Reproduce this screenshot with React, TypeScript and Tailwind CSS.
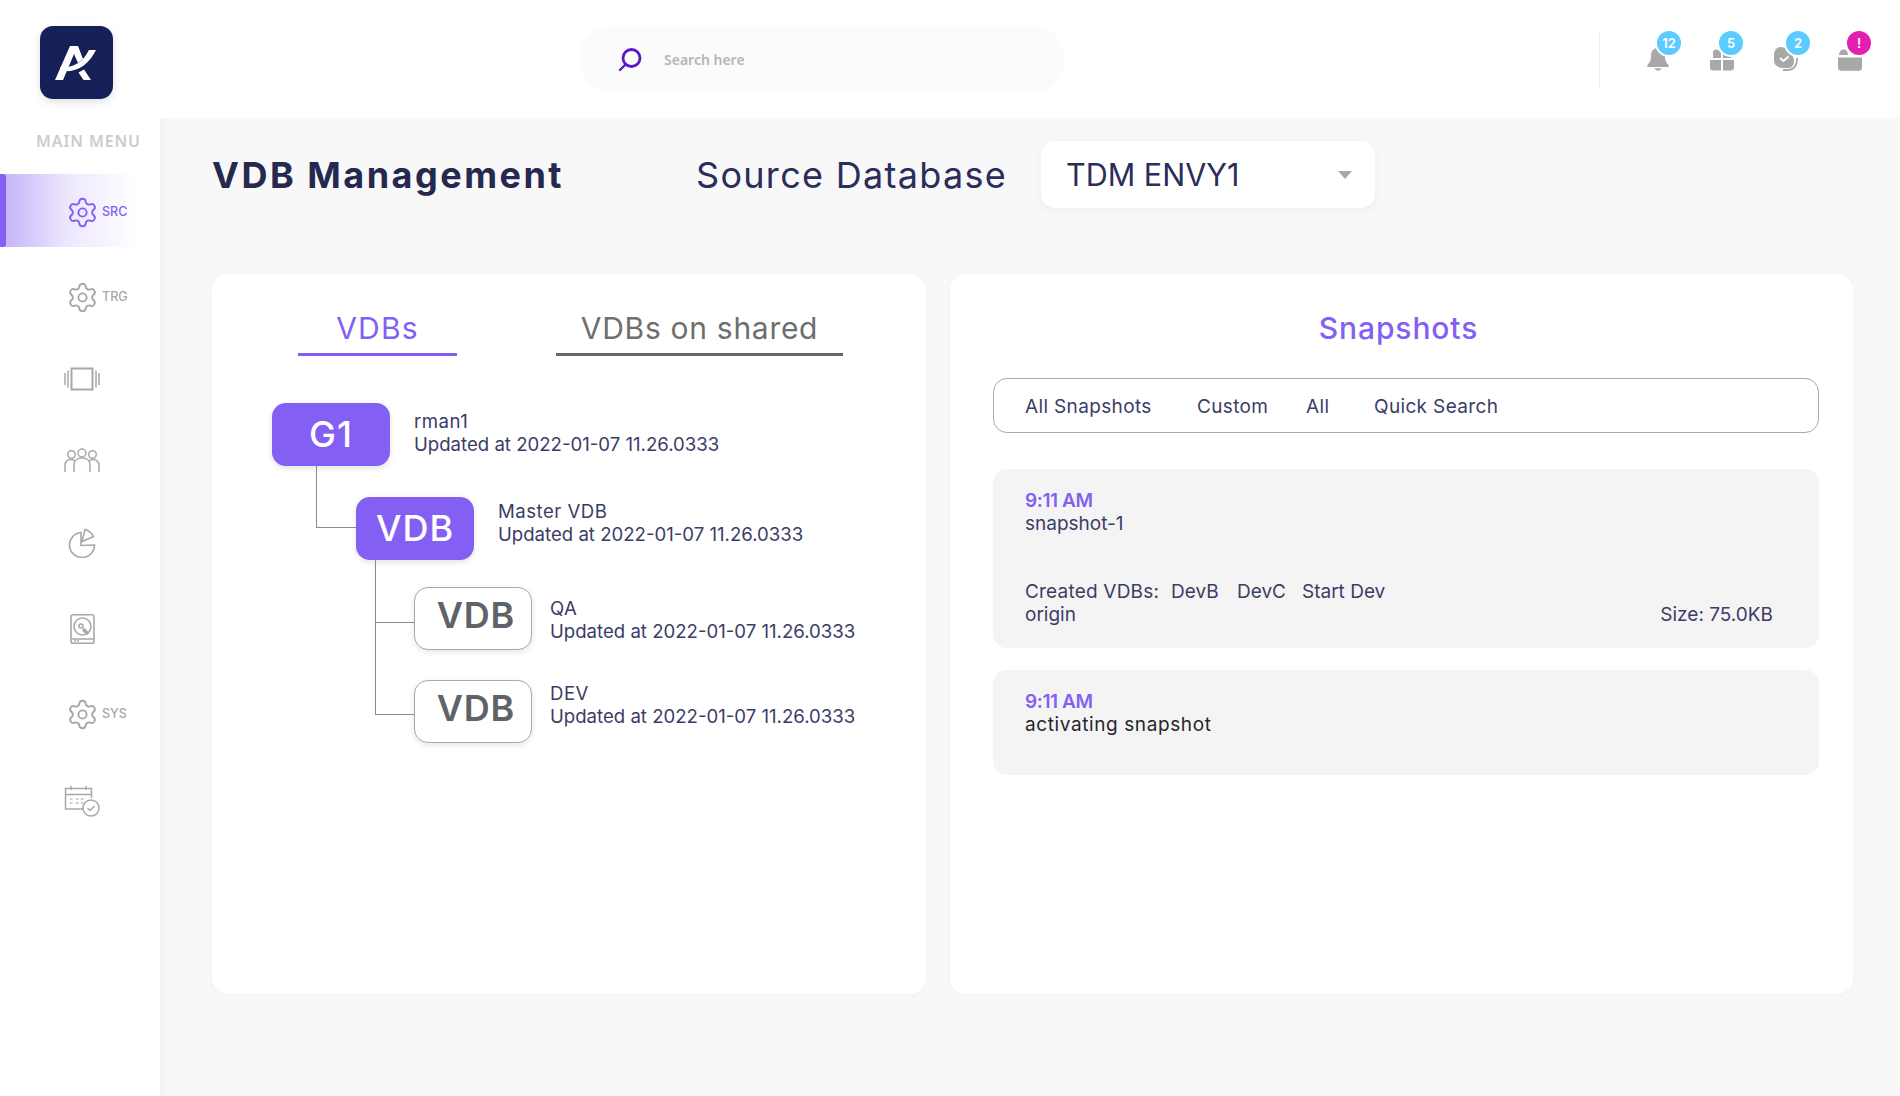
import * as React from "react";
import { Settings } from "lucide-react";

const font = "font-['Inter','Liberation_Sans',sans-serif]";

function LogoMark() {
  return (
    <svg viewBox="0 0 73 73" className="h-[73px] w-[73px]">
      <rect width="73" height="73" rx="13" fill="#152058" />
      <polygon points="15,54 30,20 38,20 43,33 38,37 34,28 23,54" fill="#fff" />
      <polygon points="38.500,46.500 44,43.500 51,54 43.500,54" fill="#fff" />
      <path d="M20 41C32 42 42 38 49 24L56 24C49 38 38 47 20 45Z" fill="#fff" />
    </svg>
  );
}

function StripIcon() {
  return (
    <svg viewBox="0 0 36 24" className="h-6 w-9" fill="none" stroke="#a8a8a8" strokeWidth="1.5">
      <rect x="7.500" y="1.500" width="21" height="21" strokeWidth="2" />
      <path d="M1 6v12M4 3.500v17M32 3.500v17M35 6v12" />
    </svg>
  );
}

function PeopleIcon() {
  return (
    <svg viewBox="0 0 36 26" className="h-[26px] w-9" fill="none" stroke="#a8a8a8" strokeWidth="1.5">
      <circle cx="7.500" cy="7.500" r="3.800" />
      <circle cx="18" cy="6" r="4" />
      <circle cx="28.500" cy="7.500" r="3.800" />
      <path d="M1 25v-7c0-3 2.500-5.500 6-5.500 1.500 0 3 .5 4 1.500" />
      <path d="M10 25v-7c0-4 3-7 8-7s8 3 8 7v7" />
      <path d="M35 25v-7c0-3-2.500-5.500-6-5.500-1.500 0-3 .5-4 1.500" />
    </svg>
  );
}

function PieIcon() {
  return (
    <svg viewBox="0 0 36 30" className="h-[30px] w-9" fill="none" stroke="#a8a8a8" strokeWidth="1.600">
      <path d="M17 4.500a12.500 12.500 0 1 0 13.500 12.500L17 17.500z" />
      <path d="M21 1.500l-3 12 11.500-5C28 5.500 24.500 2.500 21 1.500z" />
    </svg>
  );
}

function DiskIcon() {
  return (
    <svg viewBox="0 0 36 30" className="h-[30px] w-9" fill="none" stroke="#a8a8a8" strokeWidth="1.600">
      <rect x="7" y="0.800" width="23" height="28.400" rx="2" />
      <path d="M7 25h23M10 27h2M13 27h2" />
      <circle cx="18.500" cy="12.500" r="8.500" />
      <circle cx="17" cy="12" r="2" />
      <path d="M19 15l5 5" strokeWidth="3.500" />
    </svg>
  );
}

function CalendarIcon() {
  return (
    <svg viewBox="0 0 36 32" className="h-8 w-9" fill="none" stroke="#a8a8a8" strokeWidth="1.500">
      <path d="M22 24H1.500V3.500h26V13" />
      <path d="M1.500 9.500h26M7 1v4M22 1v4" />
      <path d="M6 14h3M12 14h3M17 14h3M6 18h3M12 18h3M17 18h3" strokeDasharray="1.500 1" />
      <circle cx="27" cy="23" r="8" fill="#fff" />
      <path d="M23.500 23l2.500 2.500 4.500-4.500" />
    </svg>
  );
}

function BellIcon() {
  return (
    <svg viewBox="0 0 24 24" className="h-6 w-6" fill="#a8a8a8">
      <path d="M12 1c-4.600 0-7 3.500-7 7.500 0 5-1.200 7-3.500 9.500-.7.800-.5 2 1 2h19c1.500 0 1.700-1.200 1-2-2.300-2.500-3.500-4.500-3.500-9.500C19 4.500 16.600 1 12 1z" />
      <path d="M8.500 21.300h7c-.5 1.500-1.900 2.500-3.500 2.500s-3-1-3.500-2.500z" />
    </svg>
  );
}

function GiftIcon() {
  return (
    <svg viewBox="0 0 24 22" className="h-[22px] w-6" fill="#a8a8a8">
      <path d="M3 3.500C3 1.500 4.500.5 6 .5s5 1.500 5 4.500v4H3z" />
      <path d="M13 9V5c0-3 3.500-4.500 5-4.500s3 1 3 3V9z" />
      <path d="M0 11h11v10.500H3c-1.700 0-3-1.300-3-3zM13 11h11v7.500c0 1.700-1.300 3-3 3h-8z" />
    </svg>
  );
}

function CheckBlobIcon() {
  return (
    <svg viewBox="0 0 24 24" className="h-6 w-6">
      <path d="M7 0C3 0 0 3 0 8v5c0 5 4 8 9 8h5c4 0 6-3 6-7 0-3-1-5-3-7-2.500-3-5.500-7-10-7z" fill="#a8a8a8" />
      <path d="M6 11l3.500 3 5-4.500" fill="none" stroke="#fff" strokeWidth="2" />
      <path d="M23 11c.5 7-3 12-10 12H9" fill="none" stroke="#a8a8a8" strokeWidth="1.800" />
    </svg>
  );
}

function FolderIcon() {
  return (
    <svg viewBox="0 0 24 22" className="h-[22px] w-6" fill="#a8a8a8">
      <path d="M1 6c0-3 2-5.500 4.500-5.500S10 2.500 10 6z" />
      <path d="M0 8.500h24v10c0 1.900-1.300 3.200-3 3.200H3c-1.700 0-3-1.300-3-3.200z" />
    </svg>
  );
}

function HeaderAlert({ icon, badge, alert, badgeClass }: { icon: React.ReactNode; badge: string; alert?: boolean; badgeClass: string }) {
  return (
    <div className="relative flex h-6 w-6 items-end">
      {icon}
      <span
        className={`absolute -top-[18px] flex h-[28px] w-[28px] items-center justify-center rounded-full border-2 border-white text-[13px] leading-none font-semibold text-white ${badgeClass} ${alert ? "bg-[#e21fb0]" : "bg-[#5ccbff]"}`}
      >
        {badge}
      </span>
    </div>
  );
}

function VdbNode({
  label,
  filled,
  title,
  rowClass,
  textClass,
  connector,
}: {
  label: string;
  filled: boolean;
  title: string;
  rowClass: string;
  textClass: string;
  connector?: React.ReactNode;
}) {
  return (
    <div className={`flex items-start ${rowClass}`}>
      <div
        className={`relative flex h-[63px] w-[118px] shrink-0 items-center justify-center rounded-[14px] text-[36px] ${
          filled
            ? "bg-[#8360f3] pb-0.5 font-medium tracking-[1px] text-white shadow-[0_2px_6px_rgba(0,0,0,0.12)]"
            : "border border-[#a9a9a9] bg-white pb-[7px] pl-1.5 font-semibold tracking-[0.8px] text-[#5f6368] shadow-[0_2px_6px_rgba(0,0,0,0.1)]"
        }`}
      >
        {label}
        {connector}
      </div>
      <div className={`text-[18.6px] leading-[22.5px] whitespace-nowrap text-[#3b3d66] ${textClass}`}>
        <div className="tracking-[0.5px]">{title}</div>
        <div>Updated at 2022-01-07 11.26.0333</div>
      </div>
    </div>
  );
}

export default function App() {
  return (
    <div className={`flex min-h-[1096px] w-[1900px] flex-col bg-white ${font}`}>
      <header className="flex h-[118px] shrink-0 items-start bg-white">
        <div className="mt-[26px] ml-10 rounded-[13px] shadow-[0_3px_8px_rgba(0,0,0,0.12)]">
          <LogoMark />
        </div>
        <div className="mt-[26px] ml-[466px] flex h-[67px] w-[486px] items-center rounded-full bg-[#fbfbfb] pl-[39px]">
          <svg viewBox="0 0 24 24" className="h-6 w-6" fill="none" stroke="#5a18c9" strokeWidth="2.800" strokeLinecap="round">
            <circle cx="13.500" cy="10" r="8.500" />
            <path d="M7 17l-5 5" strokeWidth="2.400" />
          </svg>
          <span className="ml-[22px] font-['Noto_Sans',sans-serif] text-[14px] font-semibold text-[#b5b5b5]">Search here</span>
        </div>
        <div className="mt-8 ml-[534px] h-[55px] w-px bg-[#f0f0f0]" />
        <div className="mt-[47px] ml-[46px] flex gap-[40px]">
          <HeaderAlert icon={<BellIcon />} badge="12" badgeClass="left-[9px]" />
          <HeaderAlert icon={<GiftIcon />} badge="5" badgeClass="left-[7px]" />
          <HeaderAlert icon={<CheckBlobIcon />} badge="2" badgeClass="left-[10px]" />
          <HeaderAlert icon={<FolderIcon />} badge="!" alert badgeClass="left-[7px]" />
        </div>
      </header>

      <div className="flex flex-1">
        <aside className="w-[160px] shrink-0 bg-white">
          <div className="pt-[14px] pl-9 font-['Noto_Sans',sans-serif] text-[16px] leading-[18px] font-semibold tracking-[0.9px] whitespace-nowrap text-[#cccccc]">
            MAIN MENU
          </div>
          <div className="relative mt-6 flex h-[73px] w-[145px] items-center bg-gradient-to-r from-[#c2b0f8] via-[#ece6fd] via-45% to-white to-95% pt-[3px] pl-[64px]">
            <span className="absolute top-0 left-0 h-full w-[6px] rounded-r-[3px] bg-[#8360f3]" />
            <span className="flex w-9 justify-center">
              <Settings size={33} strokeWidth={1.4} color="#8360f3" />
            </span>
            <span className="ml-0.5 text-[12.5px] font-medium text-[#8360f3]">SRC</span>
          </div>
          <div className="mt-[30px] flex h-10 items-center pl-[64px]">
            <span className="flex w-9 justify-center">
              <Settings size={33} strokeWidth={1.4} color="#a8a8a8" />
            </span>
            <span className="ml-0.5 text-[12.5px] font-medium text-[#a8a8a8]">TRG</span>
          </div>
          <div className="mt-[42px] flex h-10 items-center pl-[64px]">
            <StripIcon />
          </div>
          <div className="mt-[41px] flex h-10 items-center pl-[64px]">
            <PeopleIcon />
          </div>
          <div className="mt-[43px] flex h-10 items-center pl-[64px]">
            <PieIcon />
          </div>
          <div className="mt-[46px] flex h-10 items-center pl-[64px]">
            <DiskIcon />
          </div>
          <div className="mt-[45px] flex h-10 items-center pl-[64px]">
            <span className="flex w-9 justify-center">
              <Settings size={33} strokeWidth={1.4} color="#a8a8a8" />
            </span>
            <span className="ml-0.5 text-[12.5px] font-medium text-[#a8a8a8]">SYS</span>
          </div>
          <div className="mt-[47px] flex h-10 items-center pl-[64px]">
            <CalendarIcon />
          </div>
        </aside>

        <main className="flex-1 bg-[#f8f8f8] pt-[23px] pl-[52px] shadow-[inset_8px_0_8px_-6px_rgba(0,0,0,0.03)]">
          <div className="flex h-[67px] items-center">
            <h1 className="w-[484px] text-[36px] font-bold tracking-[2.5px] text-[#25284f]">VDB Management</h1>
            <span className="w-[345px] text-[36px] tracking-[1.3px] text-[#2b2d5b]">Source Database</span>
            <div className="flex h-[67px] w-[334px] items-center justify-between rounded-[14px] bg-white pr-[23px] pl-[25px] shadow-[0_2px_8px_rgba(0,0,0,0.05)]">
              <span className="text-[30.5px] text-[#2b2d5b]">TDM ENVY1</span>
              <span className="h-0 w-0 border-x-[7px] border-t-[8px] border-x-transparent border-t-[#a8a8a8]" />
            </div>
          </div>

          <div className="mt-[66px] flex gap-6">
            <section className="h-[720px] w-[714px] rounded-[16px] bg-white pt-[36px] shadow-[0_1px_6px_rgba(0,0,0,0.03)]">
              <div className="flex pl-[86px]">
                <div className="w-[159px] border-b-[3px] border-[#8360f3] pb-[7px] text-center text-[30px] leading-[36px] tracking-[1.2px] text-[#8360f3]">VDBs</div>
                <div className="ml-[99px] w-[287px] border-b-[3px] border-[#666666] pb-[7px] text-center text-[30px] leading-[36px] tracking-[0.7px] text-[#6e6e6e]">
                  VDBs on shared
                </div>
              </div>
              <div className="mt-[47px] pl-[60px]">
                <VdbNode label="G1" filled title="rman1" rowClass="" textClass="ml-[24px] pt-[7px]" />
                <VdbNode
                  label="VDB"
                  filled
                  title="Master VDB"
                  rowClass="mt-[31px] ml-[84px]"
                  textClass="ml-[24px] pt-[3px]"
                  connector={<span className="absolute -top-[31px] -left-[40px] h-[62px] w-[40px] border-b border-l border-[#8a8a8a]" />}
                />
                <VdbNode
                  label="VDB"
                  filled={false}
                  title="QA"
                  rowClass="mt-[27px] ml-[142px]"
                  textClass="ml-[18px] pt-[10px]"
                  connector={<span className="absolute -top-[28px] -left-[40px] h-[63px] w-[39px] border-b border-l border-[#8a8a8a]" />}
                />
                <VdbNode
                  label="VDB"
                  filled={false}
                  title="DEV"
                  rowClass="mt-[30px] ml-[142px]"
                  textClass="ml-[18px] pt-[2px]"
                  connector={<span className="absolute -top-[58px] -left-[40px] h-[92px] w-[39px] border-b border-l border-[#8a8a8a]" />}
                />
              </div>
            </section>

            <section className="h-[720px] w-[903px] rounded-[16px] bg-white pt-[36px] pr-[34px] pl-[43px] shadow-[0_1px_6px_rgba(0,0,0,0.03)]">
              <div className="pr-[15px] pb-px text-center text-[30px] leading-[36px] font-medium tracking-[0.9px] text-[#8360f3]">Snapshots</div>
              <div className="mt-[31px] flex h-[55px] items-center rounded-[14px] border border-[#a9a9a9] pt-[3px] pl-[31px] text-[19px] tracking-[0.35px] text-[#3b3d66]">
                <span className="w-[172px]">All Snapshots</span>
                <span className="w-[109px]">Custom</span>
                <span className="w-[68px]">All</span>
                <span>Quick Search</span>
              </div>
              <div className="mt-9 h-[179px] rounded-[14px] bg-[#f4f4f4] pt-5 pl-[32px] text-[19px] leading-[23px] text-[#3b3d66]">
                <div className="font-semibold tracking-[-0.4px] text-[#8360f3]">9:11 AM</div>
                <div>snapshot-1</div>
                <div className="mt-[45px] flex">
                  <span className="w-[146px] tracking-[0.2px]">Created VDBs:</span>
                  <span className="w-[66px]">DevB</span>
                  <span className="w-[65px]">DevC</span>
                  <span>Start Dev</span>
                </div>
                <div className="flex justify-between pr-[46px]">
                  <span>origin</span>
                  <span>Size: 75.0KB</span>
                </div>
              </div>
              <div className="mt-[22px] h-[105px] rounded-[14px] bg-[#f4f4f4] pt-5 pl-[32px] text-[19px] leading-[23px] text-[#26262e]">
                <div className="font-semibold tracking-[-0.4px] text-[#8360f3]">9:11 AM</div>
                <div className="tracking-[0.6px]">activating snapshot</div>
              </div>
            </section>
          </div>
        </main>
      </div>
    </div>
  );
}
